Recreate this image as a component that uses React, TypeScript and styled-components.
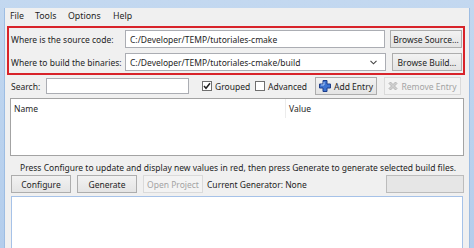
import React from "react";
import styled, { createGlobalStyle } from "styled-components";

const Global = createGlobalStyle`
  html, body { margin: 0; padding: 0; background: #b4cfee; }
  body { font-family: "Noto Sans", "Open Sans", sans-serif; font-size: 8.5px; color: #1e1e1e; }
  * { box-sizing: border-box; }
`;

const Frame = styled.div`
  width: 474px;
  height: 248px;
  background: linear-gradient(#c3d8f0, #b3cdec);
  padding: 8px 5px 0 5px;
  overflow: hidden;
`;

const Client = styled.div`
  background: #f0f0f0;
  height: 100%;
  display: flex;
  flex-direction: column;
  box-shadow: -1px 0 0 #9dbde3, 1px 0 0 #9dbde3;
`;

const MenuBar = styled.div`
  display: flex;
  height: 16px;
  align-items: center;
  padding-left: 5px;
  font-size: 8.8px;
`;

const MenuItem = styled.span<{ $w: number }>`
  width: ${(p) => p.$w}px;
`;

const RedBox = styled.div`
  margin: 2px 4px 0 2px;
  border: 2px solid #d8232a;
  padding: 2px 1px 0 2px;
  display: flex;
  flex-direction: column;
  gap: 5px;
  height: 49px;
`;

const PathRow = styled.div`
  display: flex;
  align-items: center;
  height: 18px;
`;

const Label = styled.span`
  width: 114px;
  white-space: nowrap;
  flex-shrink: 0;
`;

const TextBox = styled.div<{ $w: number }>`
  width: ${(p) => p.$w}px;
  height: 18px;
  flex-shrink: 0;
  background: #fff;
  border: 1px solid #abadb3;
  padding: 0 8px 0 4px;
  display: flex;
  align-items: center;
  justify-content: space-between;
  white-space: nowrap;
`;

const Button = styled.div<{ $w: number; $disabled?: boolean }>`
  width: ${(p) => p.$w}px;
  height: 18px;
  flex-shrink: 0;
  border: 1px solid ${(p) => (p.$disabled ? "#dadada" : "#adadad")};
  background: ${(p) => (p.$disabled ? "#f3f3f3" : "linear-gradient(#f2f2f2, #e4e4e4)")};
  color: ${(p) => (p.$disabled ? "#a3a3a3" : "#1e1e1e")};
  display: flex;
  align-items: center;
  justify-content: center;
  gap: 3px;
  white-space: nowrap;
`;

const Gap = styled.div<{ $w: number }>`
  width: ${(p) => p.$w}px;
  flex-shrink: 0;
`;

const ToolRow = styled.div`
  display: flex;
  align-items: center;
  height: 18px;
  margin-top: 2px;
  padding-left: 6px;
`;

const SearchLabel = styled.span`
  width: 35px;
  flex-shrink: 0;
`;

const SearchBox = styled.div`
  width: 143px;
  height: 16px;
  flex-shrink: 0;
  background: #fff;
  border: 1px solid #abadb3;
`;

const Check = styled.span`
  width: 10px;
  height: 10px;
  flex-shrink: 0;
  border: 1px solid #6f6f6f;
  background: #fff;
  display: inline-flex;
  align-items: center;
  justify-content: center;
  margin-right: 3px;
`;

const CheckLabel = styled.label<{ $w: number }>`
  width: ${(p) => p.$w}px;
  flex-shrink: 0;
  display: flex;
  align-items: center;
`;

const Table = styled.div`
  margin: 3px 5px 0 5px;
  height: 58px;
  background: #fff;
  border: 1px solid #a3a3a3;
  display: flex;
  flex-direction: column;
`;

const Header = styled.div`
  display: flex;
  height: 19px;
  align-items: center;
`;

const HeaderCell = styled.div<{ $w?: number }>`
  width: ${(p) => (p.$w ? `${p.$w}px` : "auto")};
  flex: ${(p) => (p.$w ? "none" : "1")};
  padding-left: 3px;
  height: 100%;
  display: flex;
  align-items: center;
  border-right: ${(p) => (p.$w ? "1px solid #ececec" : "none")};
`;

const Status = styled.div`
  padding-left: 15px;
  margin-top: 3px;
  height: 16px;
  display: flex;
  align-items: center;
  white-space: nowrap;
`;

const ActionRow = styled.div`
  display: flex;
  align-items: center;
  height: 18px;
  margin-top: 0px;
  padding-left: 6px;
  gap: 6px;
`;

const GenText = styled.span`
  margin-left: -2px;
  white-space: nowrap;
`;

const Progress = styled.div`
  width: 78px;
  height: 18px;
  margin-left: auto;
  margin-right: 5px;
  background: #e6e6e6;
  border: 1px solid #bcbcbc;
`;

const Output = styled.div`
  flex: 1;
  margin: 3px 6px 0 6px;
  background: #fff;
  border: 1px solid #a6c2e8;
  border-bottom: none;
`;

const PlusIcon = () => (
  <svg width="12" height="12" viewBox="0 0 12 12">
    <path d="M4 0.5h4v3.5h3.5v4h-3.5v3.5h-4v-3.5h-3.5v-4h3.5z" fill="#3d73d0" stroke="#1c3d8a" strokeWidth="1" />
    <path d="M5 2v3h-3" stroke="#a9c8f6" strokeWidth="1" fill="none" />
  </svg>
);

const RemoveIcon = () => (
  <svg width="10" height="10" viewBox="0 0 10 10">
    <path d="M1 2.5 L2.5 1 L5 3.5 L7.5 1 L9 2.5 L6.5 5 L9 7.5 L7.5 9 L5 6.5 L2.5 9 L1 7.5 L3.5 5z" fill="#cfcfcf" stroke="#acacac" strokeWidth="0.8" />
  </svg>
);

const Chevron = () => (
  <svg width="7" height="5" viewBox="0 0 7 5">
    <path d="M0.5 0.8 L3.5 3.8 L6.5 0.8" stroke="#444" strokeWidth="1.1" fill="none" />
  </svg>
);

const Tick = () => (
  <svg width="8" height="8" viewBox="0 0 8 8">
    <path d="M1 4 L3 6.3 L7 1.3" stroke="#222" strokeWidth="1.5" fill="none" />
  </svg>
);

export default function App() {
  return (
    <>
      <Global />
      <Frame>
        <Client>
          <MenuBar>
            <MenuItem $w={25}>File</MenuItem>
            <MenuItem $w={33}>Tools</MenuItem>
            <MenuItem $w={45}>Options</MenuItem>
            <MenuItem $w={25}>Help</MenuItem>
          </MenuBar>
          <RedBox>
            <PathRow>
              <Label>Where is the source code:</Label>
              <TextBox $w={260}>C:/Developer/TEMP/tutoriales-cmake</TextBox>
              <Gap $w={5} />
              <Button $w={72}>Browse Source...</Button>
            </PathRow>
            <PathRow>
              <Label>Where to build the binaries:</Label>
              <TextBox $w={261}>
                C:/Developer/TEMP/tutoriales-cmake/build
                <Chevron />
              </TextBox>
              <Gap $w={6} />
              <Button $w={70}>Browse Build...</Button>
            </PathRow>
          </RedBox>
          <ToolRow>
            <SearchLabel>Search:</SearchLabel>
            <SearchBox />
            <Gap $w={13} />
            <CheckLabel $w={53}>
              <Check>
                <Tick />
              </Check>
              Grouped
            </CheckLabel>
            <CheckLabel $w={60}>
              <Check />
              Advanced
            </CheckLabel>
            <Button $w={62}>
              <PlusIcon />
              Add Entry
            </Button>
            <Gap $w={7} />
            <Button $w={77} $disabled>
              <RemoveIcon />
              Remove Entry
            </Button>
          </ToolRow>
          <Table>
            <Header>
              <HeaderCell $w={275}>Name</HeaderCell>
              <HeaderCell>Value</HeaderCell>
            </Header>
          </Table>
          <Status>
            Press Configure to update and display new values in red, then press Generate to generate selected build files.
          </Status>
          <ActionRow>
            <Button $w={60}>Configure</Button>
            <Button $w={60}>Generate</Button>
            <Button $w={60} $disabled>
              Open Project
            </Button>
            <GenText>Current Generator: None</GenText>
            <Progress />
          </ActionRow>
          <Output />
        </Client>
      </Frame>
    </>
  );
}
